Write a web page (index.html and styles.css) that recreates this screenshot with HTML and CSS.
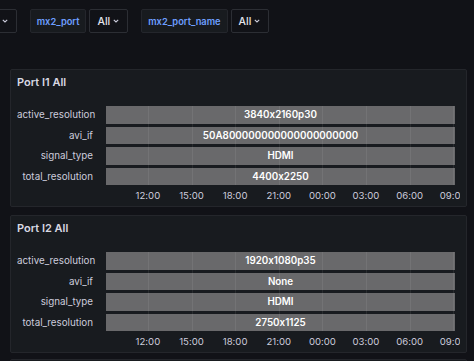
FILE: index.html
```html
<!DOCTYPE html>
<html>
<head>
<meta charset="utf-8">
<link rel="stylesheet" href="styles.css">
</head>
<body>
<div class="toolbar">
  <div class="select"><span>All</span><svg class="chev" viewBox="0 0 6 4"><path d="M0.8 0.8 L3 3 L5.2 0.8"/></svg></div>
  <div class="var">
    <div class="var-label">mx2_port</div>
    <div class="select"><span>All</span><svg class="chev" viewBox="0 0 6 4"><path d="M0.8 0.8 L3 3 L5.2 0.8"/></svg></div>
  </div>
  <div class="var">
    <div class="var-label">mx2_port_name</div>
    <div class="select"><span>All</span><svg class="chev" viewBox="0 0 6 4"><path d="M0.8 0.8 L3 3 L5.2 0.8"/></svg></div>
  </div>
</div>

<div class="panels">
  <section class="panel">
    <div class="panel-title">Port I1 All</div>
    <div class="chart">
      <div class="label r1">active_resolution</div>
      <div class="bar r1">3840x2160p30</div>
      <div class="label r2">avi_if</div>
      <div class="bar r2">50A800000000000000000000</div>
      <div class="label r3">signal_type</div>
      <div class="bar r3">HDMI</div>
      <div class="label r4">total_resolution</div>
      <div class="bar r4">4400x2250</div>
      <div class="gridlines">
        <i style="left:12%"></i><i style="left:24.5%"></i><i style="left:37%"></i><i style="left:49.5%"></i><i style="left:62%"></i><i style="left:74.5%"></i><i style="left:87%"></i><i style="left:99.5%"></i>
      </div>
      <div class="axis">
        <span style="left:12%">12:00</span><span style="left:24.5%">15:00</span><span style="left:37%">18:00</span><span style="left:49.5%">21:00</span><span style="left:62%">00:00</span><span style="left:74.5%">03:00</span><span style="left:87%">06:00</span><span style="left:99.5%">09:00</span>
      </div>
    </div>
  </section>

  <section class="panel">
    <div class="panel-title">Port I2 All</div>
    <div class="chart">
      <div class="label r1">active_resolution</div>
      <div class="bar r1">1920x1080p35</div>
      <div class="label r2">avi_if</div>
      <div class="bar r2">None</div>
      <div class="label r3">signal_type</div>
      <div class="bar r3">HDMI</div>
      <div class="label r4">total_resolution</div>
      <div class="bar r4">2750x1125</div>
      <div class="gridlines">
        <i style="left:12%"></i><i style="left:24.5%"></i><i style="left:37%"></i><i style="left:49.5%"></i><i style="left:62%"></i><i style="left:74.5%"></i><i style="left:87%"></i><i style="left:99.5%"></i>
      </div>
      <div class="axis">
        <span style="left:12%">12:00</span><span style="left:24.5%">15:00</span><span style="left:37%">18:00</span><span style="left:49.5%">21:00</span><span style="left:62%">00:00</span><span style="left:74.5%">03:00</span><span style="left:87%">06:00</span><span style="left:99.5%">09:00</span>
      </div>
    </div>
  </section>

  <section class="panel panel-cut"></section>
</div>
</body>
</html>
```
FILE: styles.css
```css
* { box-sizing: border-box; }

html, body {
  margin: 0;
  padding: 0;
  background: #111217;
  overflow: hidden;
  height: 100%;
}

body {
  font-family: Inter, "Noto Sans", sans-serif;
  font-feature-settings: "calt" 0;
  color: #ccccdc;
}

.toolbar {
  display: flex;
  gap: 13px;
  padding-top: 9px;
  margin-left: -22px;
  height: 33px;
}

.var {
  display: flex;
  gap: 3px;
}

.var-label {
  height: 24px;
  display: flex;
  align-items: center;
  padding: 0 6px;
  background: #181b1f;
  border: 1px solid #24262c;
  border-radius: 2px;
  color: #6e9fff;
  font-size: 9.3px;
  font-weight: 600;
}

.select {
  height: 24px;
  display: flex;
  align-items: center;
  gap: 3px;
  padding: 0 8px 0 7px;
  background: #111217;
  border: 1px solid #2c2e34;
  border-radius: 2px;
  color: #e4e4ec;
  font-size: 10.5px;
  font-weight: 500;
}

.chev {
  width: 6px;
  height: 4px;
  fill: none;
  stroke: #ccccdc;
  stroke-width: 1.1;
}

.panels {
  display: flex;
  flex-direction: column;
  gap: 8px;
  padding: 36px 7px 0 10px;
}

.panel {
  height: 138px;
  background: #181b1f;
  border: 1px solid #24262b;
  border-radius: 2px;
  display: flex;
  flex-direction: column;
}

.panel-cut { margin-top: -2px; }

.panel-title {
  height: 25px;
  line-height: 25px;
  padding-left: 6px;
  font-size: 11px;
  font-weight: 600;
  color: #d8d9e3;
}

.chart {
  margin: 11px 6px 0 6px;
  display: grid;
  grid-template-columns: 76px 1fr;
  grid-template-rows: repeat(4, 17.5px) 16px;
  column-gap: 13px;
  row-gap: 3px;
  overflow: hidden;
  position: relative;
}

.label {
  grid-column: 1;
  text-align: right;
  font-size: 9.8px;
  line-height: 17.5px;
  color: #ccccdc;
  white-space: nowrap;
}

.r1 { grid-row: 1; }
.r2 { grid-row: 2; }
.r3 { grid-row: 3; }
.r4 { grid-row: 4; }

.bar {
  grid-column: 2;
  margin-right: 5px;
  background: #69696b;
  color: #ffffff;
  font-size: 9.8px;
  font-weight: 600;
  text-align: center;
  line-height: 17.5px;
}

.gridlines {
  grid-column: 2;
  grid-row: 1 / 5;
  margin-right: 5px;
  position: relative;
  pointer-events: none;
}

.gridlines i {
  position: absolute;
  top: 0;
  bottom: 0;
  width: 1px;
  background: rgba(255, 255, 255, 0.07);
}

.axis {
  grid-column: 2;
  grid-row: 5;
  margin-right: 5px;
  position: relative;
}

.axis span {
  position: absolute;
  top: 0;
  transform: translateX(-50%);
  font-size: 9.6px;
  line-height: 16px;
  color: #ccccdc;
  white-space: nowrap;
}
```
